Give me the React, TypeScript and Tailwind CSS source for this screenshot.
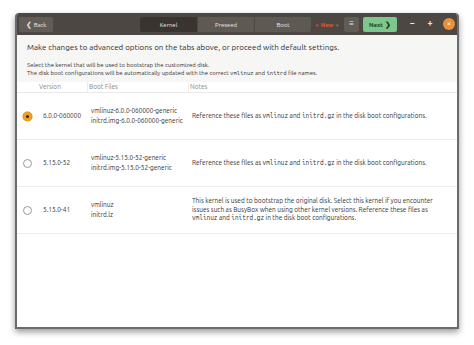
import React from "react";

const kernels = [
  {
    version: "6.0.0-060000",
    files: ["vmlinuz-6.0.0-060000-generic", "initrd.img-6.0.0-060000-generic"],
    selected: true,
    note: "ref",
  },
  {
    version: "5.15.0-52",
    files: ["vmlinuz-5.15.0-52-generic", "initrd.img-5.15.0-52-generic"],
    selected: false,
    note: "ref",
  },
  {
    version: "5.15.0-41",
    files: ["vmlinuz", "initrd.lz"],
    selected: false,
    note: "orig",
  },
];

const mono = "font-['Ubuntu_Mono','DejaVu_Sans_Mono',monospace] leading-[0]";

function Radio({ on }: { on: boolean }) {
  if (on) {
    return (
      <div className="w-[9px] h-[9px] rounded-full bg-[#f0a020] flex items-center justify-center shadow-[0_0_0_0.5px_#c98414]">
        <div className="w-[3px] h-[3px] rounded-full bg-[#3a2a10]" />
      </div>
    );
  }
  return <div className="w-[9px] h-[9px] rounded-full border border-[#9a9a9a] bg-white" />;
}

export default function App() {
  return (
    <div className="w-[474px] h-[345px] bg-white pt-[13px] pl-[15px] font-['Ubuntu','Noto_Sans',sans-serif]">
      <div className="w-[444px] h-[316px] bg-white rounded-t-[4px] border-x-2 border-b-2 border-[#6b6b6b] shadow-[0_3px_6px_rgba(0,0,0,0.4)] flex flex-col overflow-hidden">
        {/* header bar */}
        <div className="h-[22px] bg-[#4d4743] flex items-center text-[6px] text-[#e8e6e3]">
          <div className="ml-[2px] w-[34px] h-[15px] rounded-[2px] bg-[#625c57] flex items-center justify-center">
            <span className="mr-[2px] text-[7px]">❮</span>Back
          </div>
          <div className="ml-[87px] flex h-[15px] rounded-[2px] overflow-hidden">
            <div className="w-[57px] bg-[#3a3431] flex items-center justify-center">Kernel</div>
            <div className="w-[57px] bg-[#5f5954] border-l border-[#4d4743] flex items-center justify-center">Preseed</div>
            <div className="w-[57px] bg-[#5f5954] border-l border-[#4d4743] flex items-center justify-center">Boot</div>
          </div>
          <div className="ml-[2px] w-[28px] flex items-center justify-center text-[#e2571e] font-bold">
            <span className="mr-[2px]">×</span>New<span className="ml-[2px]">+</span>
          </div>
          <div className="ml-[3px] w-[15px] h-[15px] rounded-[2px] bg-[#625c57] flex items-center justify-center text-[8px]">≡</div>
          <div className="ml-[4px] w-[34px] h-[15px] rounded-[2px] bg-[#7dc68c] text-[#1f3a24] font-bold flex items-center justify-center">
            Next<span className="ml-[2px] text-[7px]">❯</span>
          </div>
          <div className="ml-[11px] w-[8px] text-center text-[9px] font-bold">−</div>
          <div className="ml-[10px] w-[8px] text-center text-[9px] font-bold">+</div>
          <div className="ml-[9px] w-[12px] h-[12px] rounded-full bg-[#e9903b] flex items-center justify-center text-[8px] text-[#fff6ea] leading-none">×</div>
        </div>

        {/* intro */}
        <div className="bg-[#f6f6f5] h-[47px] pl-[10px] pt-[7px]">
          <div className="text-[8px] leading-[12px] text-[#2e2e2e]">
            Make changes to advanced options on the tabs above, or proceed with default settings.
          </div>
          <div className="mt-[7px] text-[6px] leading-[8px] text-[#333]">
            <div>Select the kernel that will be used to bootstrap the customized disk.</div>
            <div>
              The disk boot configurations will be automatically updated with the correct{" "}
              <span className={mono}>vmlinuz</span> and <span className={mono}>initrd</span> file names.
            </div>
          </div>
        </div>

        {/* table */}
        <div className="text-[6.5px] text-[#333]">
          <div className="h-[11px] flex items-center border-b border-[#e8e8e8] text-[#888]">
            <div className="w-[22px]" />
            <div className="w-[48px]">Version</div>
            <div className="w-[101px] border-l border-[#ececec] pl-[1px]">Boot Files</div>
            <div className="border-l border-[#ececec] pl-[1px]">Notes</div>
          </div>
          {kernels.map((k) => (
            <div key={k.version} className="h-[47px] flex items-center border-b border-[#ececec]">
              <div className="w-[26px] pl-[6px]">
                <Radio on={k.selected} />
              </div>
              <div className="w-[48px]">{k.version}</div>
              <div className="w-[101px] leading-[10px]">
                {k.files.map((f) => (
                  <div key={f}>{f}</div>
                ))}
              </div>
              <div className="w-[248px] leading-[8.5px]">
                {k.note === "ref" ? (
                  <span>
                    Reference these files as <span className={mono}>vmlinuz</span> and{" "}
                    <span className={mono}>initrd.gz</span> in the disk boot configurations.
                  </span>
                ) : (
                  <span>
                    This kernel is used to bootstrap the original disk. Select this kernel if you encounter
                    issues such as BusyBox when using other kernel versions. Reference these files as{" "}
                    <span className={mono}>vmlinuz</span> and <span className={mono}>initrd.gz</span> in the disk
                    boot configurations.
                  </span>
                )}
              </div>
            </div>
          ))}
        </div>
      </div>
    </div>
  );
}
